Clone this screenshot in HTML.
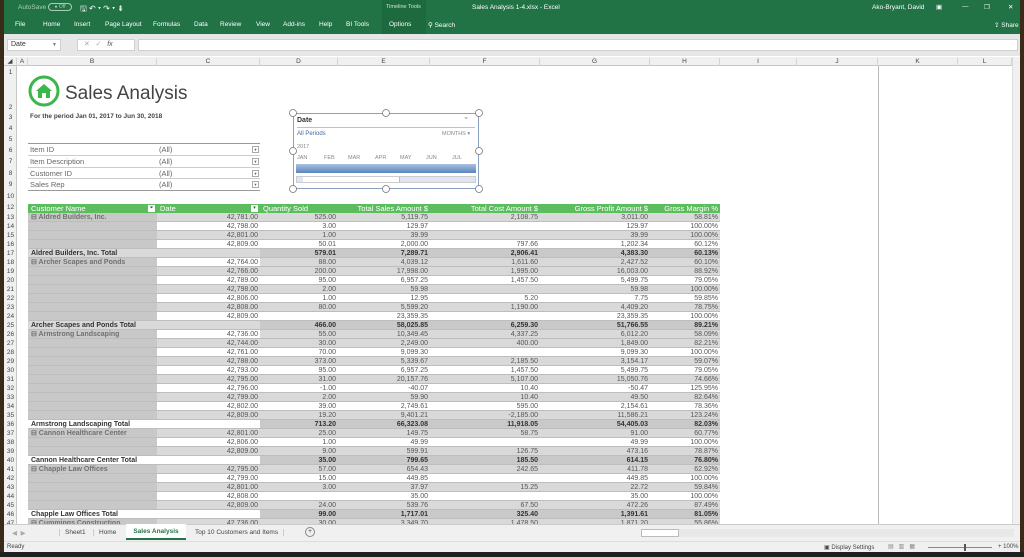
<!DOCTYPE html>
<html><head><meta charset="utf-8"><style>
*{margin:0;padding:0;box-sizing:border-box}
body{width:1024px;height:557px;overflow:hidden;background:#3a2a1a;font-family:"Liberation Sans",sans-serif;position:relative}
.a{position:absolute}
#win{position:absolute;left:4px;top:0;width:1016px;height:552px;background:#fff;overflow:hidden}
.tb{left:0;top:0;width:1016px;height:34px;background:#217346;color:#fff;font-size:6.5px}
.tb span{position:absolute;white-space:nowrap}
.fb{left:0;top:34px;width:1016px;height:22px;background:#e6e6e6}
.ch{left:0;top:57px;width:1016px;height:9px;background:#f0f0f0;border-bottom:1px solid #c6c6c6;font-size:6.5px;color:#444}
.ch span{position:absolute;top:1px;text-align:center;border-right:1px solid #d4d4d4;height:8px;line-height:7px}
.rh{left:0;width:13px;background:#f0f0f0;border-right:1px solid #c6c6c6;font-size:6.5px;color:#444;text-align:center}
.rn{position:absolute;left:0;width:13px;text-align:center;font-size:6.5px;line-height:9px;color:#444}
.r{position:absolute;left:24px;height:9px;display:flex;font-size:7px;line-height:9px;color:#555;border-bottom:1px solid #bdbdbd}
.r div{height:8px;text-align:right;padding-right:2px;white-space:nowrap;overflow:hidden}
.c1{width:129px;text-align:left!important;padding-left:3px}
.c2{width:103px}.c3{width:78px}.c4{width:92px}.c5{width:110px}.c6{width:110px}.c7{width:70px}
.i .c1{background:#c8c8c8}
.g{background:#d9d9d9}.w{background:#fff}
.t div{font-weight:bold;color:#333}
.t .d{background:#c9c9c9}
.gh{font-weight:bold;color:#707070!important}
</style></head><body>
<div id="win">
<div class="a tb">
<span style="left:14px;top:4px;color:#a9cdb5">AutoSave</span>
<span style="left:44px;top:3px;width:24px;height:8px;border:1px solid #a9cdb5;border-radius:4px;font-size:5px;line-height:6px;text-align:center;color:#a9cdb5">● Off</span>
<span style="left:76px;top:3px;font-size:8px">🖫 ↶ ▾ ↷ ▾ ⇟</span>
<span style="left:378px;top:0;width:44px;height:34px;background:#1d6a3e"></span>
<span style="left:382px;top:4px;font-size:5.5px;color:#cfe3d6">Timeline Tools</span>
<span style="left:468px;top:4px">Sales Analysis 1-4.xlsx - Excel</span>
<span style="left:868px;top:4px">Ako-Bryant, David</span>
<span style="left:932px;top:3px">▣</span><span style="left:958px;top:3px">—</span><span style="left:980px;top:3px">❐</span><span style="left:1004px;top:3px">✕</span>
<span style="left:11px;top:21px">File</span><span style="left:39px;top:21px">Home</span><span style="left:70px;top:21px">Insert</span><span style="left:101px;top:21px">Page Layout</span><span style="left:149px;top:21px">Formulas</span><span style="left:190px;top:21px">Data</span><span style="left:216px;top:21px">Review</span><span style="left:252px;top:21px">View</span><span style="left:279px;top:21px">Add-ins</span><span style="left:315px;top:21px">Help</span><span style="left:342px;top:21px">BI Tools</span><span style="left:385px;top:21px">Options</span><span style="left:424px;top:21px">⚲ Search</span>
<span style="left:990px;top:21px">⇪ Share</span>
</div>
<div class="a fb">
<div class="a" style="left:3px;top:5px;width:54px;height:12px;background:#fff;border:1px solid #d0d0d0;font-size:7px;line-height:10px;padding-left:3px;color:#333">Date<span style="position:absolute;right:3px;font-size:5px;color:#777">▼</span></div>
<div class="a" style="left:73px;top:5px;width:58px;height:12px;background:#fff;border:1px solid #d0d0d0;font-size:7px;line-height:10px;color:#aaa">&nbsp;&nbsp;&nbsp;✕&nbsp;&nbsp;&nbsp;✓&nbsp;&nbsp;&nbsp;<i style="color:#555">fx</i></div>
<div class="a" style="left:134px;top:5px;width:880px;height:12px;background:#fff;border:1px solid #d0d0d0"></div>
</div>
<div class="a ch">
<span style="left:0;width:13px">◢</span><span style="left:13px;width:11px">A</span><span style="left:24px;width:129px">B</span><span style="left:153px;width:103px">C</span><span style="left:256px;width:78px">D</span><span style="left:334px;width:92px">E</span><span style="left:426px;width:110px">F</span><span style="left:536px;width:110px">G</span><span style="left:646px;width:70px">H</span><span style="left:716px;width:77px">I</span><span style="left:793px;width:81px">J</span><span style="left:874px;width:80px">K</span><span style="left:954px;width:54px">L</span>
</div>
<div class="a rh" style="top:66px;height:458px"></div>
<div class="a" style="left:874px;top:66px;width:1px;height:458px;background:#bbb"></div>
<div class="a" style="left:1008px;top:57px;width:8px;height:467px;background:#f0f0f0;border-left:1px solid #ddd"></div>
<div class="rn" style="top:68px">1</div><div class="rn" style="top:103px">2</div><div class="rn" style="top:113px">3</div><div class="rn" style="top:124px">4</div><div class="rn" style="top:135px">5</div><div class="rn" style="top:146px">6</div><div class="rn" style="top:157px">7</div><div class="rn" style="top:169px">8</div><div class="rn" style="top:180px">9</div><div class="rn" style="top:192px">10</div><div class="rn" style="top:203px">12</div>
<svg class="a" style="left:24px;top:75px" width="32" height="32" viewBox="0 0 32 32"><circle cx="16" cy="16" r="14" fill="#fff" stroke="#3cb54a" stroke-width="3"/><path d="M8 16 L16 9 L24 16 L22 16 L22 23 L10 23 L10 16Z" fill="#3cb54a"/><rect x="14" y="18" width="4" height="5" fill="#fff"/></svg>
<div class="a" style="left:61px;top:83px;font-size:19px;color:#444">Sales Analysis</div>
<div class="a" style="left:26px;top:113px;font-size:6.5px;font-weight:bold;color:#444">For the period Jan 01, 2017 to Jun 30, 2018</div>
<div class="a" style="left:24px;top:143px;width:232px;height:48px;border-top:1px solid #999;border-bottom:1px solid #999;font-size:7.5px;color:#666">
<div style="height:12px;border-bottom:1px solid #ccc;line-height:12px;padding-left:2px;position:relative">Item ID<span style="position:absolute;left:131px">(All)</span><span style="position:absolute;right:1px;top:2px;width:7px;height:7px;border:1px solid #aaa;font-size:4px;line-height:6px;text-align:center">▼</span></div>
<div style="height:12px;border-bottom:1px solid #ccc;line-height:12px;padding-left:2px;position:relative">Item Description<span style="position:absolute;left:131px">(All)</span><span style="position:absolute;right:1px;top:2px;width:7px;height:7px;border:1px solid #aaa;font-size:4px;line-height:6px;text-align:center">▼</span></div>
<div style="height:11px;border-bottom:1px solid #ccc;line-height:11px;padding-left:2px;position:relative">Customer ID<span style="position:absolute;left:131px">(All)</span><span style="position:absolute;right:1px;top:2px;width:7px;height:7px;border:1px solid #aaa;font-size:4px;line-height:6px;text-align:center">▼</span></div>
<div style="height:11px;line-height:11px;padding-left:2px;position:relative">Sales Rep<span style="position:absolute;left:131px">(All)</span><span style="position:absolute;right:1px;top:2px;width:7px;height:7px;border:1px solid #aaa;font-size:4px;line-height:6px;text-align:center">▼</span></div>
</div>
<div class="a" style="left:289px;top:113px;width:186px;height:76px;border:1px solid #8aa0c0;background:#fff;font-size:5.5px;color:#888">
<div class="a" style="left:3px;top:3px;font-size:7px;font-weight:bold;color:#333">Date</div>
<div class="a" style="left:3px;top:13px;width:178px;height:1px;background:#b0c4de"></div>
<div class="a" style="left:170px;top:2px;color:#aaa">⏷</div>
<div class="a" style="left:3px;top:17px;font-size:6px;color:#3d6aa8">All Periods</div>
<div class="a" style="left:148px;top:17px">MONTHS ▾</div>
<div class="a" style="left:3px;top:30px">2017</div>
<div class="a" style="left:3px;top:41px">JAN</div><div class="a" style="left:30px;top:41px">FEB</div><div class="a" style="left:54px;top:41px">MAR</div><div class="a" style="left:81px;top:41px">APR</div><div class="a" style="left:106px;top:41px">MAY</div><div class="a" style="left:132px;top:41px">JUN</div><div class="a" style="left:158px;top:41px">JUL</div>
<div class="a" style="left:2px;top:50px;width:180px;height:9px;background:linear-gradient(#a9c2e0,#5b84bd)"></div>
<div class="a" style="left:2px;top:62px;width:180px;height:7px;background:#dde6f2;border:1px solid #ccc"><div style="position:absolute;left:6px;top:0;width:97px;height:5px;background:#fff;border-right:1px solid #bbb"></div></div>
</div>
<svg class="a" style="left:284px;top:108px" width="196" height="86"><g fill="#fff" stroke="#777" stroke-width="0.8"><circle cx="5" cy="5" r="3.5"/><circle cx="98" cy="5" r="3.5"/><circle cx="191" cy="5" r="3.5"/><circle cx="5" cy="43" r="3.5"/><circle cx="191" cy="43" r="3.5"/><circle cx="5" cy="81" r="3.5"/><circle cx="98" cy="81" r="3.5"/><circle cx="191" cy="81" r="3.5"/></g></svg>
<div class="a" style="left:24px;top:204px;width:692px;height:9px;background:#5cbd5f;color:#fff;font-size:7.5px;line-height:9px;display:flex">
<div style="width:129px;padding-left:3px;position:relative">Customer Name<span style="position:absolute;right:2px;top:1px;width:7px;height:7px;background:#fff;color:#444;font-size:5px;line-height:7px;text-align:center">⏷</span></div>
<div style="width:103px;padding-left:3px;position:relative">Date<span style="position:absolute;right:2px;top:1px;width:7px;height:7px;background:#fff;color:#444;font-size:5px;line-height:7px;text-align:center">▾</span></div>
<div style="width:78px;padding-left:3px">Quantity Sold</div>
<div style="width:92px;text-align:right;padding-right:2px">Total Sales Amount $</div>
<div style="width:110px;text-align:right;padding-right:2px">Total Cost Amount $</div>
<div style="width:110px;text-align:right;padding-right:2px">Gross Profit Amount $</div>
<div style="width:70px;text-align:right;padding-right:2px">Gross Margin %</div>
</div>
<div class="rn" style="top:213px">13</div><div class="r i" style="top:213px"><div class="c1 gh">⊟ Aldred Builders, Inc.</div><div class="c2 g">42,781.00</div><div class="c3 g">525.00</div><div class="c4 g">5,119.75</div><div class="c5 g">2,108.75</div><div class="c6 g">3,011.00</div><div class="c7 g">58.81%</div></div>
<div class="rn" style="top:222px">14</div><div class="r i" style="top:222px"><div class="c1"></div><div class="c2 w">42,798.00</div><div class="c3 w">3.00</div><div class="c4 w">129.97</div><div class="c5 w"></div><div class="c6 w">129.97</div><div class="c7 w">100.00%</div></div>
<div class="rn" style="top:231px">15</div><div class="r i" style="top:231px"><div class="c1"></div><div class="c2 g">42,801.00</div><div class="c3 g">1.00</div><div class="c4 g">39.99</div><div class="c5 g"></div><div class="c6 g">39.99</div><div class="c7 g">100.00%</div></div>
<div class="rn" style="top:240px">16</div><div class="r i" style="top:240px"><div class="c1"></div><div class="c2 w">42,809.00</div><div class="c3 w">50.01</div><div class="c4 w">2,000.00</div><div class="c5 w">797.66</div><div class="c6 w">1,202.34</div><div class="c7 w">60.12%</div></div>
<div class="rn" style="top:249px">17</div><div class="r t" style="top:249px"><div class="c1 g">Aldred Builders, Inc. Total</div><div class="c2 g"></div><div class="c3 d">579.01</div><div class="c4 d">7,289.71</div><div class="c5 d">2,906.41</div><div class="c6 d">4,383.30</div><div class="c7 d">60.13%</div></div>
<div class="rn" style="top:258px">18</div><div class="r i" style="top:258px"><div class="c1 gh">⊟ Archer Scapes and Ponds</div><div class="c2 w">42,764.00</div><div class="c3 g">88.00</div><div class="c4 g">4,039.12</div><div class="c5 g">1,611.60</div><div class="c6 g">2,427.52</div><div class="c7 g">60.10%</div></div>
<div class="rn" style="top:267px">19</div><div class="r i" style="top:267px"><div class="c1"></div><div class="c2 g">42,766.00</div><div class="c3 g">200.00</div><div class="c4 g">17,998.00</div><div class="c5 g">1,995.00</div><div class="c6 g">16,003.00</div><div class="c7 g">88.92%</div></div>
<div class="rn" style="top:276px">20</div><div class="r i" style="top:276px"><div class="c1"></div><div class="c2 w">42,789.00</div><div class="c3 w">95.00</div><div class="c4 w">6,957.25</div><div class="c5 w">1,457.50</div><div class="c6 w">5,499.75</div><div class="c7 w">79.05%</div></div>
<div class="rn" style="top:285px">21</div><div class="r i" style="top:285px"><div class="c1"></div><div class="c2 g">42,798.00</div><div class="c3 g">2.00</div><div class="c4 g">59.98</div><div class="c5 g"></div><div class="c6 g">59.98</div><div class="c7 g">100.00%</div></div>
<div class="rn" style="top:294px">22</div><div class="r i" style="top:294px"><div class="c1"></div><div class="c2 w">42,806.00</div><div class="c3 w">1.00</div><div class="c4 w">12.95</div><div class="c5 w">5.20</div><div class="c6 w">7.75</div><div class="c7 w">59.85%</div></div>
<div class="rn" style="top:303px">23</div><div class="r i" style="top:303px"><div class="c1"></div><div class="c2 g">42,808.00</div><div class="c3 g">80.00</div><div class="c4 g">5,599.20</div><div class="c5 g">1,190.00</div><div class="c6 g">4,409.20</div><div class="c7 g">78.75%</div></div>
<div class="rn" style="top:312px">24</div><div class="r i" style="top:312px"><div class="c1"></div><div class="c2 w">42,809.00</div><div class="c3 w"></div><div class="c4 w">23,359.35</div><div class="c5 w"></div><div class="c6 w">23,359.35</div><div class="c7 w">100.00%</div></div>
<div class="rn" style="top:321px">25</div><div class="r t" style="top:321px"><div class="c1 g">Archer Scapes and Ponds Total</div><div class="c2 g"></div><div class="c3 d">466.00</div><div class="c4 d">58,025.85</div><div class="c5 d">6,259.30</div><div class="c6 d">51,766.55</div><div class="c7 d">89.21%</div></div>
<div class="rn" style="top:330px">26</div><div class="r i" style="top:330px"><div class="c1 gh">⊟ Armstrong Landscaping</div><div class="c2 w">42,736.00</div><div class="c3 g">55.00</div><div class="c4 g">10,349.45</div><div class="c5 g">4,337.25</div><div class="c6 g">6,012.20</div><div class="c7 g">58.09%</div></div>
<div class="rn" style="top:339px">27</div><div class="r i" style="top:339px"><div class="c1"></div><div class="c2 g">42,744.00</div><div class="c3 g">30.00</div><div class="c4 g">2,249.00</div><div class="c5 g">400.00</div><div class="c6 g">1,849.00</div><div class="c7 g">82.21%</div></div>
<div class="rn" style="top:348px">28</div><div class="r i" style="top:348px"><div class="c1"></div><div class="c2 w">42,761.00</div><div class="c3 w">70.00</div><div class="c4 w">9,099.30</div><div class="c5 w"></div><div class="c6 w">9,099.30</div><div class="c7 w">100.00%</div></div>
<div class="rn" style="top:357px">29</div><div class="r i" style="top:357px"><div class="c1"></div><div class="c2 g">42,788.00</div><div class="c3 g">373.00</div><div class="c4 g">5,339.67</div><div class="c5 g">2,185.50</div><div class="c6 g">3,154.17</div><div class="c7 g">59.07%</div></div>
<div class="rn" style="top:366px">30</div><div class="r i" style="top:366px"><div class="c1"></div><div class="c2 w">42,793.00</div><div class="c3 w">95.00</div><div class="c4 w">6,957.25</div><div class="c5 w">1,457.50</div><div class="c6 w">5,499.75</div><div class="c7 w">79.05%</div></div>
<div class="rn" style="top:375px">31</div><div class="r i" style="top:375px"><div class="c1"></div><div class="c2 g">42,795.00</div><div class="c3 g">31.00</div><div class="c4 g">20,157.76</div><div class="c5 g">5,107.00</div><div class="c6 g">15,050.76</div><div class="c7 g">74.66%</div></div>
<div class="rn" style="top:384px">32</div><div class="r i" style="top:384px"><div class="c1"></div><div class="c2 w">42,796.00</div><div class="c3 w">-1.00</div><div class="c4 w">-40.07</div><div class="c5 w">10.40</div><div class="c6 w">-50.47</div><div class="c7 w">125.95%</div></div>
<div class="rn" style="top:393px">33</div><div class="r i" style="top:393px"><div class="c1"></div><div class="c2 g">42,799.00</div><div class="c3 g">2.00</div><div class="c4 g">59.90</div><div class="c5 g">10.40</div><div class="c6 g">49.50</div><div class="c7 g">82.64%</div></div>
<div class="rn" style="top:402px">34</div><div class="r i" style="top:402px"><div class="c1"></div><div class="c2 w">42,802.00</div><div class="c3 w">39.00</div><div class="c4 w">2,749.61</div><div class="c5 w">595.00</div><div class="c6 w">2,154.61</div><div class="c7 w">78.36%</div></div>
<div class="rn" style="top:411px">35</div><div class="r i" style="top:411px"><div class="c1"></div><div class="c2 g">42,809.00</div><div class="c3 g">19.20</div><div class="c4 g">9,401.21</div><div class="c5 g">-2,185.00</div><div class="c6 g">11,586.21</div><div class="c7 g">123.24%</div></div>
<div class="rn" style="top:420px">36</div><div class="r t" style="top:420px"><div class="c1 w">Armstrong Landscaping Total</div><div class="c2 w"></div><div class="c3 d">713.20</div><div class="c4 d">66,323.08</div><div class="c5 d">11,918.05</div><div class="c6 d">54,405.03</div><div class="c7 d">82.03%</div></div>
<div class="rn" style="top:429px">37</div><div class="r i" style="top:429px"><div class="c1 gh">⊟ Cannon Healthcare Center</div><div class="c2 g">42,801.00</div><div class="c3 g">25.00</div><div class="c4 g">149.75</div><div class="c5 g">58.75</div><div class="c6 g">91.00</div><div class="c7 g">60.77%</div></div>
<div class="rn" style="top:438px">38</div><div class="r i" style="top:438px"><div class="c1"></div><div class="c2 w">42,806.00</div><div class="c3 w">1.00</div><div class="c4 w">49.99</div><div class="c5 w"></div><div class="c6 w">49.99</div><div class="c7 w">100.00%</div></div>
<div class="rn" style="top:447px">39</div><div class="r i" style="top:447px"><div class="c1"></div><div class="c2 g">42,809.00</div><div class="c3 g">9.00</div><div class="c4 g">599.91</div><div class="c5 g">126.75</div><div class="c6 g">473.16</div><div class="c7 g">78.87%</div></div>
<div class="rn" style="top:456px">40</div><div class="r t" style="top:456px"><div class="c1 w">Cannon Healthcare Center Total</div><div class="c2 w"></div><div class="c3 d">35.00</div><div class="c4 d">799.65</div><div class="c5 d">185.50</div><div class="c6 d">614.15</div><div class="c7 d">76.80%</div></div>
<div class="rn" style="top:465px">41</div><div class="r i" style="top:465px"><div class="c1 gh">⊟ Chapple Law Offices</div><div class="c2 g">42,795.00</div><div class="c3 g">57.00</div><div class="c4 g">654.43</div><div class="c5 g">242.65</div><div class="c6 g">411.78</div><div class="c7 g">62.92%</div></div>
<div class="rn" style="top:474px">42</div><div class="r i" style="top:474px"><div class="c1"></div><div class="c2 w">42,799.00</div><div class="c3 w">15.00</div><div class="c4 w">449.85</div><div class="c5 w"></div><div class="c6 w">449.85</div><div class="c7 w">100.00%</div></div>
<div class="rn" style="top:483px">43</div><div class="r i" style="top:483px"><div class="c1"></div><div class="c2 g">42,801.00</div><div class="c3 g">3.00</div><div class="c4 g">37.97</div><div class="c5 g">15.25</div><div class="c6 g">22.72</div><div class="c7 g">59.84%</div></div>
<div class="rn" style="top:492px">44</div><div class="r i" style="top:492px"><div class="c1"></div><div class="c2 w">42,808.00</div><div class="c3 w"></div><div class="c4 w">35.00</div><div class="c5 w"></div><div class="c6 w">35.00</div><div class="c7 w">100.00%</div></div>
<div class="rn" style="top:501px">45</div><div class="r i" style="top:501px"><div class="c1"></div><div class="c2 g">42,809.00</div><div class="c3 g">24.00</div><div class="c4 g">539.76</div><div class="c5 g">67.50</div><div class="c6 g">472.26</div><div class="c7 g">87.49%</div></div>
<div class="rn" style="top:510px">46</div><div class="r t" style="top:510px"><div class="c1 w">Chapple Law Offices Total</div><div class="c2 w"></div><div class="c3 d">99.00</div><div class="c4 d">1,717.01</div><div class="c5 d">325.40</div><div class="c6 d">1,391.61</div><div class="c7 d">81.05%</div></div>
<div class="rn" style="top:519px">47</div><div class="r i" style="top:519px"><div class="c1 gh">⊟ Cummings Construction</div><div class="c2 g">42,736.00</div><div class="c3 g">30.00</div><div class="c4 g">3,349.70</div><div class="c5 g">1,478.50</div><div class="c6 g">1,871.20</div><div class="c7 g">55.86%</div></div>
<div class="a" style="left:0;top:524px;width:1016px;height:17px;background:#f0f0f0;border-top:1px solid #ccc;font-size:6.5px;color:#444">
<span class="a" style="left:8px;top:4px;color:#aaa">◀&nbsp;&nbsp;▶</span>
<span class="a" style="left:55px;top:4px;border-left:1px solid #ccc;padding:0 5px">Sheet1</span>
<span class="a" style="left:89px;top:4px;border-left:1px solid #ccc;padding:0 5px">Home</span>
<div class="a" style="left:122px;top:-1px;width:60px;height:16px;background:#fff;border-bottom:2px solid #217346;color:#217346;font-weight:bold;text-align:center;line-height:15px">Sales Analysis</div>
<span class="a" style="left:186px;top:4px;border-right:1px solid #ccc;padding:0 5px">Top 10 Customers and Items</span>
<span class="a" style="left:301px;top:2px;width:10px;height:10px;border:1px solid #888;border-radius:50%;text-align:center;line-height:8px">+</span>
<div class="a" style="left:637px;top:4px;width:38px;height:8px;background:#fff;border:1px solid #bbb"></div>
<div class="a" style="left:675px;top:4px;width:335px;height:8px;background:#e8e8e8"></div>
</div>
<div class="a" style="left:0;top:541px;width:1016px;height:11px;background:#f0f0f0;border-top:1px solid #ddd;font-size:6px;color:#444">
<span class="a" style="left:3px;top:2px">Ready</span>
<span class="a" style="left:820px;top:2px">▣ Display Settings</span>
<span class="a" style="left:884px;top:1px;color:#888">▤&nbsp;&nbsp;&nbsp;▥&nbsp;&nbsp;&nbsp;▦</span>
<div class="a" style="left:924px;top:5px;width:64px;height:1px;background:#888"></div>
<div class="a" style="left:960px;top:2px;width:2px;height:7px;background:#555"></div>
<span class="a" style="left:994px;top:2px">+ 100%</span>
</div>
</div>
<div class="a" style="left:0;top:552px;width:1024px;height:5px;background:#202020"></div>
</body></html>
